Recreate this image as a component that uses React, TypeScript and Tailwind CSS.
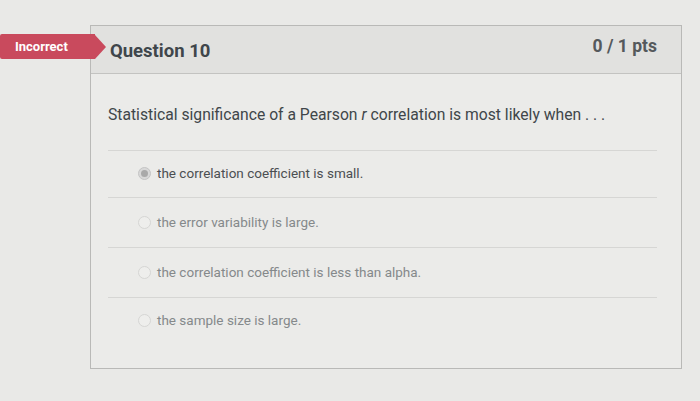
const options = [
  { text: "the correlation coefficient is small.", selected: true, h: "h-[47px]" },
  { text: "the error variability is large.", selected: false, h: "h-[50px]" },
  { text: "the correlation coefficient is less than alpha.", selected: false, h: "h-[50px]" },
  { text: "the sample size is large.", selected: false, h: "h-[46px]" },
];

function Radio({ selected }: { selected: boolean }) {
  if (selected) {
    return (
      <span className="flex h-[13px] w-[13px] shrink-0 items-center justify-center rounded-full border border-[#c4c4c4] bg-[#d8d8d8]">
        <span className="h-[7px] w-[7px] rounded-full bg-[#a9a9a9]" />
      </span>
    );
  }
  return <span className="h-[13px] w-[13px] shrink-0 rounded-full border border-[#d6d6d4] bg-[#eeeeec]" />;
}

export default function App() {
  return (
    <div className="h-[401px] w-[700px] overflow-hidden bg-[#e9e9e7] pt-[25px] font-['Roboto',sans-serif]">
      <div className="relative ml-[90px] h-[344px] w-[592px] border border-[#b9b9b7] bg-[#ebebe9]">
        {/* status badge */}
        <div className="absolute left-[-91px] top-[8px] flex h-[25px] items-center">
          <div className="flex h-full w-[95px] items-center rounded-l-[2px] bg-[#c94a5d] pl-[15px] text-[13px] font-bold text-white">
            Incorrect
          </div>
          <div className="h-0 w-0 border-y-[12.5px] border-l-[11px] border-y-transparent border-l-[#c94a5d]" />
        </div>

        <div className="flex h-[48px] items-center justify-between border-b border-[#c3c3c1] bg-[#e1e1df] pl-[19px] pr-[24px]">
          <span className="pt-[4px] text-[18.5px] font-bold text-[#3f464b]">Question 10</span>
          <span className="pb-[6px] text-[17.5px] font-bold text-[#55595c]">0 / 1 pts</span>
        </div>

        <div className="pl-[17px] pr-[24px]">
          <p className="pt-[29px] pb-[23px] text-[15.7px] text-[#40464a]">
            Statistical significance of a Pearson <i>r</i> correlation is most likely when . . .
          </p>
          {options.map((o, i) => (
            <div
              key={i}
              className={`flex ${o.h} items-center gap-[6px] border-t border-[#d6d6d4] pl-[30px]`}
            >
              <Radio selected={o.selected} />
              <span
                className={
                  o.selected
                    ? "text-[13.5px] text-[#4b4f52]"
                    : "text-[13.5px] text-[#85898b]"
                }
              >
                {o.text}
              </span>
            </div>
          ))}
        </div>
      </div>
    </div>
  );
}
